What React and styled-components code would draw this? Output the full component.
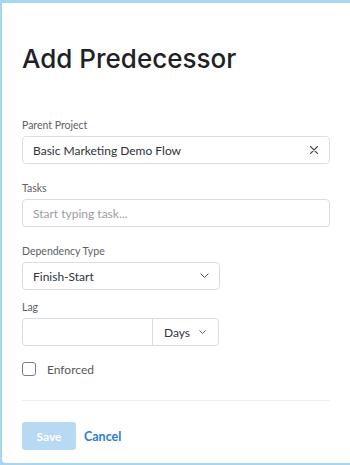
import React from 'react'
import styled, { createGlobalStyle } from 'styled-components'

const GlobalStyle = createGlobalStyle`
  html, body {
    margin: 0;
    padding: 0;
    background: #a6d6f0;
    font-family: 'Lato', 'Liberation Sans', sans-serif;
  }
  * { box-sizing: border-box; }
`

const Panel = styled.div`
  margin: 3px 0 0 2px;
  height: 460px;
  background: #fff;
  border-bottom-left-radius: 4px;
  padding: 41px 20px 0 20px;
  color: #333;
`

const Title = styled.h1`
  margin: 0 0 44px 0;
  font-family: 'Inter', 'Lato', sans-serif;
  font-size: 26px;
  line-height: 30px;
  font-weight: 500;
  color: #1f2126;
`

const Field = styled.div`
  margin-bottom: ${p => p.$gap || 17}px;
  width: ${p => p.$width || '308px'};
`

const Label = styled.label`
  display: block;
  font-size: 10.5px;
  line-height: 14px;
  color: #5d6066;
  margin-bottom: 4px;
`

const Box = styled.div`
  display: flex;
  align-items: center;
  height: 28px;
  border: 1px solid #dadce0;
  border-radius: 4px;
  background: #fff;
  font-size: 12px;
  color: ${p => (p.$placeholder ? '#9a9da3' : '#2f3237')};
`

const BoxText = styled.span`
  flex: 1;
  padding-left: 10px;
`

const IconSlot = styled.span`
  display: flex;
  align-items: center;
  justify-content: center;
  width: 30px;
  height: 100%;
  color: #4a4d52;
`

const LagInput = styled.div`
  width: 130px;
  height: 100%;
  border-right: 1px solid #dadce0;
`

const UnitSelect = styled.div`
  flex: 1;
  display: flex;
  align-items: center;
  justify-content: space-between;
  padding: 0 12px 0 11px;
  color: #34373c;
`

const CheckRow = styled.div`
  display: flex;
  align-items: center;
  gap: 11px;
  height: 16px;
  font-size: 12px;
  color: #55585e;
  margin-bottom: 23px;
`

const CheckBox = styled.span`
  width: 14px;
  height: 14px;
  border: 1px solid #7a7d82;
  border-radius: 3px;
`

const Divider = styled.hr`
  margin: 0 0 21px 0;
  width: 308px;
  border: none;
  border-top: 1px solid #eceef0;
`

const Actions = styled.div`
  display: flex;
  align-items: center;
  gap: 8px;
`

const SaveButton = styled.button`
  width: 54px;
  height: 28px;
  border: none;
  border-radius: 3px;
  background: #b7d9f3;
  color: #fff;
  font-family: inherit;
  font-weight: 700;
  font-size: 12px;
`

const LinkButton = styled.button`
  border: none;
  background: none;
  padding: 0;
  color: #2a7bd4;
  font-family: inherit;
  font-weight: 700;
  font-size: 12.5px;
`

const CloseIcon = () => (
  <svg width="8" height="8" viewBox="0 0 8 8" fill="none" stroke="currentColor" strokeWidth="1.1" strokeLinecap="round">
    <path d="M0.5 0.5L7.5 7.5M7.5 0.5L0.5 7.5" />
  </svg>
)

const Chevron = ({ size = 9 }) => (
  <svg width={size} height={size * 0.6} viewBox="0 0 10 6" fill="none" stroke="currentColor" strokeWidth="1.1" strokeLinecap="round" strokeLinejoin="round">
    <path d="M1 1L5 5L9 1" />
  </svg>
)

export default function App() {
  return (
    <>
      <GlobalStyle />
      <Panel>
        <Title>Add Predecessor</Title>

        <Field>
          <Label>Parent Project</Label>
          <Box>
            <BoxText>Basic Marketing Demo Flow</BoxText>
            <IconSlot><CloseIcon /></IconSlot>
          </Box>
        </Field>

        <Field>
          <Label>Tasks</Label>
          <Box $placeholder>
            <BoxText>Start typing task...</BoxText>
          </Box>
        </Field>

        <Field $gap={10} $width="198px">
          <Label>Dependency Type</Label>
          <Box>
            <BoxText>Finish-Start</BoxText>
            <IconSlot><Chevron /></IconSlot>
          </Box>
        </Field>

        <Field $gap={15} $width="197px">
          <Label>Lag</Label>
          <Box>
            <LagInput />
            <UnitSelect>
              Days
              <Chevron size={7} />
            </UnitSelect>
          </Box>
        </Field>

        <CheckRow>
          <CheckBox />
          Enforced
        </CheckRow>

        <Divider />

        <Actions>
          <SaveButton>Save</SaveButton>
          <LinkButton>Cancel</LinkButton>
        </Actions>
      </Panel>
    </>
  )
}
